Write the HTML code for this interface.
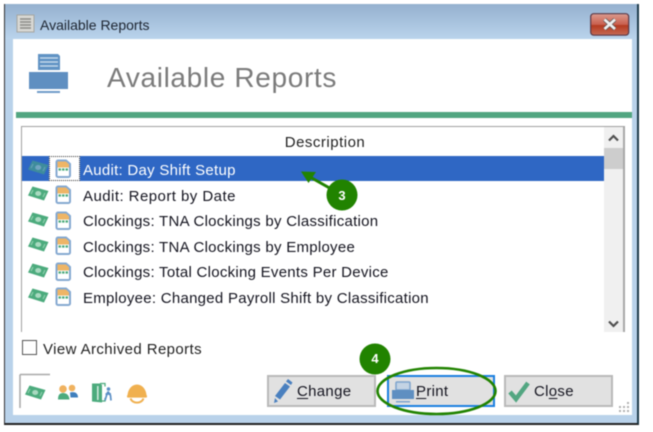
<!DOCTYPE html>
<html><head><meta charset="utf-8">
<style>
html,body{margin:0;padding:0;background:#fff}
#w{position:relative;width:653px;height:432px;overflow:hidden;background:#fff;font-family:"Liberation Sans",sans-serif;color:#14141f;filter:blur(.4px)}
#w div,#w span.a,#w svg{position:absolute}
.t{font-size:15px;line-height:18px;white-space:nowrap;left:83px;letter-spacing:.27px}
.btn{background:#e1e1e1;border:2px solid #b9b9b9;box-sizing:border-box;height:32px;top:375px}
.bt{font-size:15px;line-height:20px;white-space:nowrap;top:382px;letter-spacing:.3px}
u{text-underline-offset:2px}
</style></head><body>
<div id="w">
<div style="left:4px;top:4px;width:635px;height:421px;background:#b9d2ea;border-left:1px solid #333;border-right:2px solid #1d3a4a;border-bottom:2px solid #222;box-sizing:border-box"></div>
<div style="left:5px;top:4px;width:632px;height:35px;background:linear-gradient(#95b1cf,#bad4ec)"></div>
<div style="left:13px;top:39px;width:619px;height:376px;background:#fff"></div>

<svg style="left:16px;top:14px" width="19" height="19" viewBox="0 0 19 19"><rect x="1" y="1" width="17" height="17" fill="#d8d8d4" stroke="#a5a5a0"/><path d="M4 5h11M4 8h11M4 11h11M4 14h11" stroke="#8c8c88" stroke-width="1.6"/></svg>
<div style="left:40px;top:17px;font-size:14px;line-height:17px;color:#1c2430;white-space:nowrap">Available Reports</div>

<svg style="left:590px;top:13px" width="40" height="23" viewBox="0 0 40 23"><defs><linearGradient id="r" x1="0" y1="0" x2="0" y2="1"><stop offset="0" stop-color="#dc9c90"/><stop offset=".5" stop-color="#c9604f"/><stop offset=".55" stop-color="#b43a20"/><stop offset="1" stop-color="#c66a55"/></linearGradient></defs><rect x=".7" y=".7" width="38" height="21.5" rx="3" fill="url(#r)" stroke="#5a3a48" stroke-width="1.2"/><path d="M14.500 6.500L25 16M25 6.500L14.500 16" stroke="#555" stroke-width="4.200"/><path d="M14.500 6.500L25 16M25 6.500L14.500 16" stroke="#f0f0f0" stroke-width="2.800"/></svg>

<svg style="left:28px;top:53px" width="42" height="41" viewBox="0 0 42 41"><path d="M10 1h20l2 2v14H10z" fill="#6193c4"/><path d="M12 5h18M12 9h18M12 13h18" stroke="#d3e1ef" stroke-width="1.300"/><rect x="1" y="19" width="39" height="17" fill="#5f8fc1"/><rect x="9" y="38" width="23" height="2" fill="#6f9bc8"/></svg>
<div style="left:107px;top:61px;font-size:28px;line-height:33px;color:#7b7b7b;letter-spacing:.65px;white-space:nowrap">Available Reports</div>

<div style="left:16px;top:112px;width:616px;height:6px;background:#52a681"></div>

<div style="left:21px;top:126px;width:604px;height:206px;border:1px solid #a0a0a0;border-bottom:none;box-sizing:border-box;background:#fff"></div>
<div style="left:623px;top:127px;width:2px;height:205px;background:#a8a8a8"></div>
<div style="left:22px;top:134px;width:606px;text-align:center;font-size:15px;line-height:18px;letter-spacing:.5px;color:#222">Description</div>

<div style="left:604px;top:127px;width:19px;height:205px;background:#f0f0f0"></div>
<div style="left:604px;top:148px;width:19px;height:21px;background:#cdcdcd"></div>
<svg style="left:607px;top:133px" width="13" height="10" viewBox="0 0 13 10"><path d="M2 7.500L6.500 3L11 7.500" fill="none" stroke="#505050" stroke-width="2.200"/></svg>
<svg style="left:607px;top:319px" width="13" height="10" viewBox="0 0 13 10"><path d="M2 2.500L6.500 7L11 2.500" fill="none" stroke="#505050" stroke-width="2.200"/></svg>

<div style="left:22px;top:156px;width:582px;height:25px;background:#2f67c4"></div>
<div style="left:49px;top:156px;width:31px;height:25px;background:#fff;outline:1px dotted #333;outline-offset:-1px"></div>

<div class="t" style="top:162px;color:#fff">Audit: Day Shift Setup</div>
<div class="t" style="top:188px;letter-spacing:.45px">Audit: Report by Date</div>
<div class="t" style="top:213px">Clockings: TNA Clockings by Classification</div>
<div class="t" style="top:239px">Clockings: TNA Clockings by Employee</div>
<div class="t" style="top:264px">Clockings: Total Clocking Events Per Device</div>
<div class="t" style="top:290px">Employee: Changed Payroll Shift by Classification</div>

<svg style="left:0;top:0" width="653" height="432" viewBox="0 0 653 432">
<defs>
<g id="m"><path d="M5.500 0.500L21.500 5L17 14.500L1 9.500z" fill="#4cab7d"/><ellipse cx="11.200" cy="7.500" rx="3" ry="2.500" fill="#a9d9c0"/><path d="M6 4l-2 4M18 7l-2 4" stroke="#8ccdab" stroke-width="1.300"/></g>
<g id="d"><path d="M3 1.500h8l4 3.500v11.500a1.500 1.500 0 0 1-1.500 1.500H3a1.500 1.500 0 0 1-1.500-1.500V3A1.500 1.500 0 0 1 3 1.500z" fill="#fff" stroke="#85a9d1" stroke-width="2"/><path d="M2.500 2.500h8.500l3 3V8.500H2.500z" fill="#eeb566"/><path d="M3.500 10.500h2.500M7 10.500h2.500M10.500 10.500h2.500" stroke="#4cab7d" stroke-width="2.200"/></g>
</defs>
<use href="#m" x="27" y="160" opacity=".55"/><use href="#d" x="55" y="159"/>
<use href="#m" x="27" y="186"/><use href="#d" x="55" y="185"/>
<use href="#m" x="27" y="212"/><use href="#d" x="55" y="211"/>
<use href="#m" x="27" y="237"/><use href="#d" x="55" y="236"/>
<use href="#m" x="27" y="263"/><use href="#d" x="55" y="262"/>
<use href="#m" x="27" y="288"/><use href="#d" x="55" y="287"/>

<path d="M20 374.500V408M20 374.500H50" fill="none" stroke="#a8a8a8" stroke-width="1.500"/>
<use href="#m" x="24" y="385"/>
<circle cx="63" cy="389" r="3.800" fill="#f0b25f"/><path d="M58 399.500c0-5 2-6.500 5-6.500s6 1.500 6.500 6.500z" fill="#4cab7d"/>
<circle cx="72" cy="388" r="3.300" fill="#f0b25f"/><path d="M70 392.500c4-1 8 0 8 5h-7.500z" fill="#3f7fbd"/>
<path d="M92 383.500h8l2 1.500v17.500l-10-1z" fill="#4cab7d"/><rect x="97" y="386" width="1.600" height="14" fill="#cfe9dc"/><path d="M100 383.500h5v3M105 398v3h-3" fill="none" stroke="#4cab7d" stroke-width="1.300"/>
<circle cx="108.500" cy="389" r="1.800" fill="#5b8fc6"/><path d="M108 391.500l-1.500 4-1.500 5M108 391.500l2.500 4 .5 5M105.500 394l5.500 0" stroke="#5b8fc6" stroke-width="1.700" fill="none"/>
<path d="M127.500 396a9.500 11.500 0 0 1 19 0z" fill="#f0b04f"/><rect x="127" y="395" width="20" height="2.600" rx="1" fill="#f0b04f"/><path d="M130.500 398.500c2 5.500 11 5.500 13 0" fill="none" stroke="#f0b04f" stroke-width="2"/>

</svg>

<div style="left:22px;top:340px;width:15px;height:15px;border:1.500px solid #555;box-sizing:border-box;background:#fff"></div>
<div style="left:43px;top:341px;font-size:15px;line-height:18px;letter-spacing:.4px;white-space:nowrap;color:#222">View Archived Reports</div>

<div class="btn" style="left:267px;width:109px"></div>
<div class="btn" style="left:387px;width:108px;border-color:#1a7fe0;"></div>
<div class="btn" style="left:504px;width:109px"></div>

<svg style="left:0;top:0" width="653" height="432" viewBox="0 0 653 432">
<path d="M275 396l10-13 5 3.500-10 13z" fill="#4a80bf"/><path d="M286 381.500l2-2.500 4.500 3.500-1.500 2.500z" fill="#4a80bf"/><path d="M275 398l-1 5 4-1.500z" fill="#4a80bf"/>
<rect x="396" y="382" width="14" height="8" rx="1" fill="#c3d3e4" stroke="#7da3cd" stroke-width="1.500"/><rect x="392" y="390" width="22" height="9" fill="#5f8fc1"/><rect x="396" y="401" width="14" height="1.500" fill="#7da3cd"/>
<path d="M510 392l6 7 12-16" fill="none" stroke="#52a681" stroke-width="4.500"/>
<circle cx="375" cy="359" r="15.500" fill="#218300"/>
<circle cx="342" cy="195" r="15.500" fill="#218300"/>
<path d="M342 195L310 177" stroke="#218300" stroke-width="3"/><path d="M301 171.500L316 172L308.500 183z" fill="#218300"/>
<ellipse cx="436.500" cy="391" rx="59" ry="23" fill="none" stroke="#218300" stroke-width="2.600"/>
<g fill="#b0b0b0"><rect x="623" y="410" width="2" height="2"/><rect x="619" y="406" width="2" height="2"/><rect x="623" y="406" width="2" height="2"/><rect x="627" y="402" width="2" height="2"/><rect x="627" y="406" width="2" height="2"/><rect x="627" y="410" width="2" height="2"/><rect x="619" y="410" width="2" height="2"/></g>
</svg>

<div class="bt" style="left:297px"><u>C</u>hange</div>
<div class="bt" style="left:416px"><u>P</u>rint</div>
<div class="bt" style="left:534px">Cl<u>o</u>se</div>
<div style="left:365px;top:351px;width:20px;text-align:center;color:#fff;font-size:13px;font-weight:bold;line-height:16px">4</div>
<div style="left:332px;top:188px;width:20px;text-align:center;color:#fff;font-size:13px;font-weight:bold;line-height:16px">3</div>
</div>
</body></html>
